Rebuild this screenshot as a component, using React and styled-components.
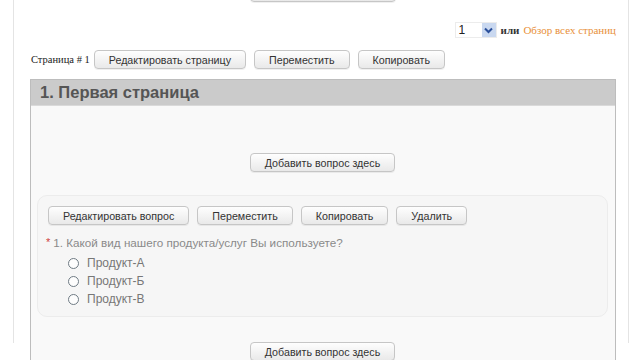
import React from 'react';
import styled, { createGlobalStyle } from 'styled-components';

const GlobalStyle = createGlobalStyle`
    html, body {
        margin: 0;
        padding: 0;
        background: #ffffff;
        overflow: hidden;
    }
`

const Screen = styled.div`
    width: 640px;
    height: 360px;
    overflow: hidden;
    background: #ffffff;
`

const Frame = styled.div`
    box-sizing: border-box;
    margin-left: 13px;
    width: 616px;
    height: 360px;
    padding: 0 12px 0 16px;
    border-left: 1px solid #e4e4e4;
    border-right: 1px solid #e4e4e4;
    font-family: "Liberation Sans", Arial, sans-serif;
`

const Button = styled.button`
    box-sizing: border-box;
    height: 19px;
    padding: 0 14px;
    border: 1px solid #c6c6c6;
    border-radius: 4px;
    background: linear-gradient(#fefefe, #e9e9e9);
    box-shadow: 0 1px 0 rgba(0, 0, 0, 0.06);
    font-family: "Liberation Sans", Arial, sans-serif;
    font-size: 10.7px;
    color: #333333;
    white-space: nowrap;
    cursor: pointer;
`

const CenterRow = styled.div`
    display: flex;
    justify-content: center;
    margin-top: ${(props) => props.$top || 0}px;
`

const PagerRow = styled.div`
    display: flex;
    justify-content: flex-end;
    align-items: center;
    gap: 4px;
    margin-top: 20px;
    height: 16px;
    font-family: "Liberation Serif", "Times New Roman", serif;
    font-size: 11px;
`

const Select = styled.div`
    box-sizing: border-box;
    width: 42px;
    height: 16px;
    display: flex;
    align-items: center;
    justify-content: space-between;
    border: 1px solid #ececec;
    background: #ffffff;
    font-family: "Liberation Sans", Arial, sans-serif;
    font-size: 12px;
    color: #222;
    padding-left: 3px;

    & > span {
        width: 14px;
        height: 14px;
        display: flex;
        align-items: center;
        justify-content: center;
        background: #c9d8f0;
    }
`

const Or = styled.span`
    font-weight: bold;
    color: #333;
`

const OverviewLink = styled.a`
    color: #e8903a;
    text-decoration: none;
    white-space: nowrap;
`

const PageToolbar = styled.div`
    display: flex;
    align-items: center;
    gap: 8px;
    margin-top: 12px;
`

const PageLabel = styled.span`
    font-family: "Liberation Serif", "Times New Roman", serif;
    font-size: 10.5px;
    color: #222;
    margin-right: -4px;
    padding-left: 1px;
`

const Panel = styled.section`
    margin-top: 10px;
    border: 1px solid #bdbdbd;
    border-bottom: none;
    height: 300px;
    display: flex;
    flex-direction: column;
`

const PanelHeader = styled.h2`
    margin: 0;
    height: 25px;
    line-height: 25px;
    padding-left: 9px;
    background: #cbcbcb;
    border-bottom: 1px solid #dadada;
    font-size: 16.5px;
    font-weight: bold;
    color: #555555;
`

const PanelBody = styled.div`
    flex: 1;
    background: #f9f9f9;
    padding: 47px 7px 0 6px;
`

const QuestionCard = styled.div`
    box-sizing: border-box;
    margin-top: 23px;
    height: 122px;
    padding: 10px 10px 0;
    border: 1px solid #ececec;
    border-radius: 10px;
    background: #f6f6f6;
`

const ButtonRow = styled.div`
    display: flex;
    gap: 8px;
`

const QuestionText = styled.div`
    margin-top: 9px;
    height: 16px;
    line-height: 16px;
    font-size: 11.7px;
    color: #8a8a8a;

    & > b {
        color: #d04040;
        font-weight: normal;
        font-size: 11px;
        margin: 0 3px 0 -2px;
        vertical-align: 1px;
    }
`

const Options = styled.div`
    margin-top: 4px;
    padding-left: 20px;
`

const Option = styled.label`
    display: flex;
    align-items: center;
    gap: 8px;
    height: 18px;
    font-size: 12px;
    color: #777777;
`

const Radio = styled.span`
    box-sizing: border-box;
    width: 11px;
    height: 11px;
    border-radius: 50%;
    border: 1.5px solid #6f7b84;
    background: #fdfdfd;
`

const Chevron = () => (
    <svg width="9" height="7" viewBox="0 0 9 7">
        <path d="M1 1.5 L4.5 5 L8 1.5" fill="none" stroke="#2a4f9a" strokeWidth="2" />
    </svg>
);

const options = ['Продукт-А', 'Продукт-Б', 'Продукт-В'];

const App = () => (
    <Screen>
        <GlobalStyle />
        <Frame>
            <CenterRow $top={-17}>
                <Button>Добавить вопрос здесь</Button>
            </CenterRow>
            <PagerRow>
                <Select>1<span><Chevron /></span></Select>
                <Or>или</Or>
                <OverviewLink href="#">Обзор всех страниц</OverviewLink>
            </PagerRow>
            <PageToolbar>
                <PageLabel>Страница # 1</PageLabel>
                <Button>Редактировать страницу</Button>
                <Button>Переместить</Button>
                <Button>Копировать</Button>
            </PageToolbar>
            <Panel>
                <PanelHeader>1. Первая страница</PanelHeader>
                <PanelBody>
                    <CenterRow>
                        <Button>Добавить вопрос здесь</Button>
                    </CenterRow>
                    <QuestionCard>
                        <ButtonRow>
                            <Button>Редактировать вопрос</Button>
                            <Button>Переместить</Button>
                            <Button>Копировать</Button>
                            <Button>Удалить</Button>
                        </ButtonRow>
                        <QuestionText><b>*</b>1. Какой вид нашего продукта/услуг Вы используете?</QuestionText>
                        <Options>
                            {options.map((o) => (
                                <Option key={o}><Radio />{o}</Option>
                            ))}
                        </Options>
                    </QuestionCard>
                    <CenterRow $top={25}>
                        <Button>Добавить вопрос здесь</Button>
                    </CenterRow>
                </PanelBody>
            </Panel>
        </Frame>
    </Screen>
);

export default App;
